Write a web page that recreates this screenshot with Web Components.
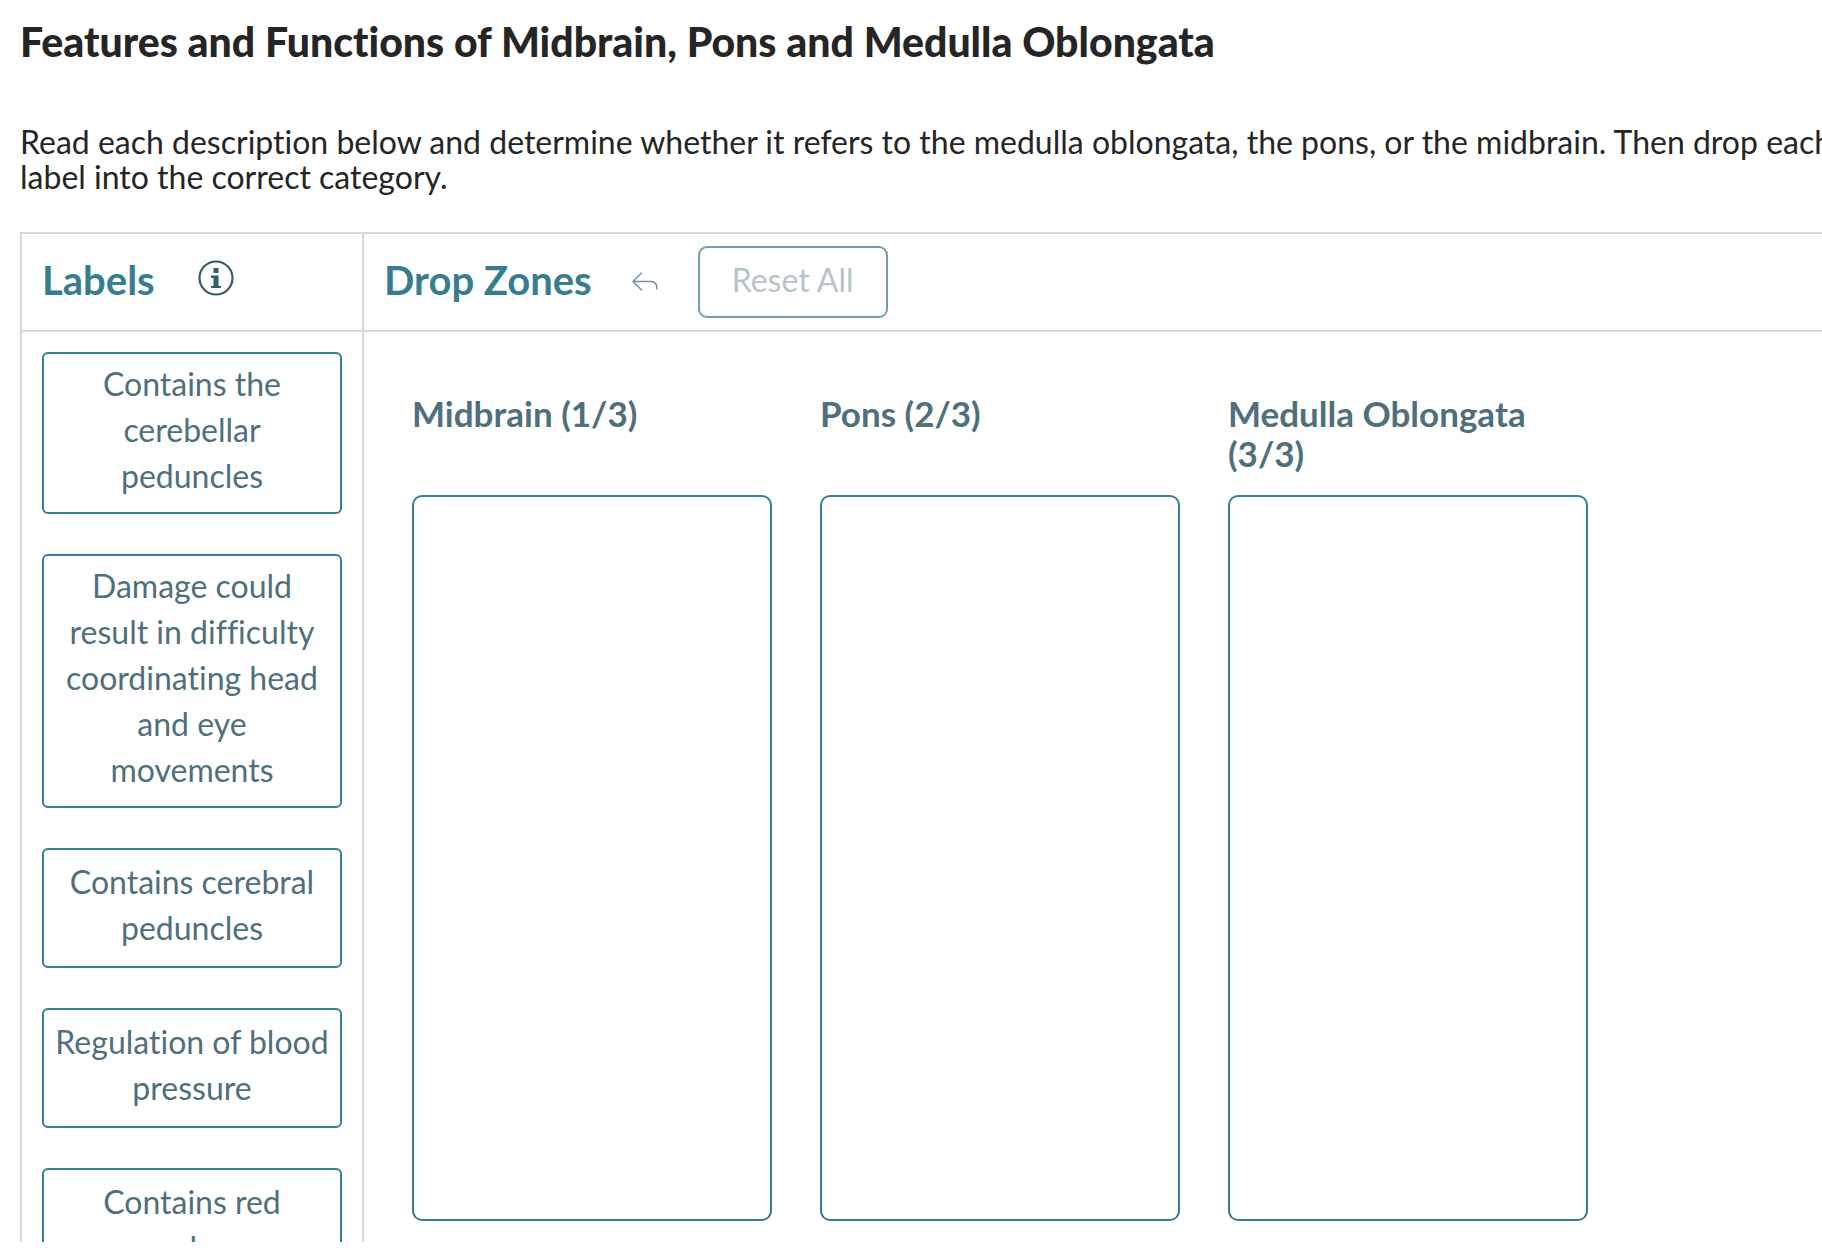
<!DOCTYPE html>
<html lang="en">
<head>
<meta charset="utf-8">
<meta name="viewport" content="width=device-width, initial-scale=1">
<title>Features and Functions of Midbrain, Pons and Medulla Oblongata</title>
<style>
    :root {
        --text: #252525;
        --teal: #367d91;
        --slate: #4f6f7b;
        --slate-dark: #375b68;
        --line: #d3dadd;
    }

    body {
        margin: 0;
        background: #fff;
        color: var(--text);
        font-family: Lato, "Open Sans", sans-serif;
        font-size: 32px;
        font-variant-ligatures: no-common-ligatures;
    }
</style>
</head>
<body>

<sorting-activity>
    <span slot="title">Features and Functions of Midbrain, Pons and Medulla Oblongata</span>
    <span slot="prompt">Read each description below and determine whether it refers to the medulla oblongata, the pons, or the midbrain. Then drop each label into the correct category.</span>

    <sorting-board>
        <drag-label slot="labels">Contains the cerebellar peduncles</drag-label>
        <drag-label slot="labels">Damage could result in difficulty coordinating head and eye movements</drag-label>
        <drag-label slot="labels">Contains cerebral peduncles</drag-label>
        <drag-label slot="labels">Regulation of blood pressure</drag-label>
        <drag-label slot="labels">Contains red nucleus</drag-label>

        <drop-zone slot="zones">Midbrain (1/3)</drop-zone>
        <drop-zone slot="zones">Pons (2/3)</drop-zone>
        <drop-zone slot="zones">Medulla Oblongata (3/3)</drop-zone>
    </sorting-board>
</sorting-activity>

<script>
class SortingActivity extends HTMLElement {
    constructor() {
        super();
        const shadow = this.attachShadow({mode: "open"});
        shadow.innerHTML = /*html*/`
            <style>
                :host {
                    display: block;
                    box-sizing: border-box;
                    height: calc(100vh - 6px);
                    overflow: hidden;
                    padding: 18px 0 0 20px;
                }

                /* the activity is a little wider than its frame */
                main {
                    margin-right: -40px;
                }

                h1 {
                    margin: 0 0 58px;
                    font-size: 41px;
                    line-height: 48px;
                    font-weight: 900;
                }

                p {
                    margin: 0 0 38px;
                    line-height: 35px;
                }
            </style>

            <main>
                <h1><slot name="title"></slot></h1>
                <p><slot name="prompt"></slot></p>
                <slot></slot>
            </main>
        `;
    }
}

class SortingBoard extends HTMLElement {
    constructor() {
        super();
        const shadow = this.attachShadow({mode: "open"});
        shadow.innerHTML = /*html*/`
            <style>
                :host {
                    display: grid;
                    grid-template-columns: 340px 1fr;
                    grid-template-rows: 96px auto;
                    gap: 2px;
                    padding: 2px;
                    background: var(--line);
                }

                header, section {
                    background: #fff;
                }

                header {
                    display: flex;
                    align-items: center;
                    gap: 40px;
                    padding: 0 20px;
                }

                h2 {
                    margin: 0;
                    padding-bottom: 4px;
                    color: var(--teal);
                    font-size: 40px;
                    line-height: 48px;
                    font-weight: 700;
                    white-space: nowrap;
                }

                .labels {
                    display: flex;
                    flex-direction: column;
                    gap: 40px;
                    padding: 20px;
                }

                .zones {
                    display: grid;
                    grid-template-columns: repeat(3, minmax(0, 360px));
                    align-items: start;
                    gap: 48px;
                    padding: 61px 48px;
                }
            </style>

            <header>
                <h2>Labels</h2>
                <icon-button name="info" label="Information"></icon-button>
            </header>
            <header>
                <h2>Drop Zones</h2>
                <icon-button name="undo" label="Undo"></icon-button>
                <reset-button>Reset All</reset-button>
            </header>
            <section class="labels"><slot name="labels"></slot></section>
            <section class="zones"><slot name="zones"></slot></section>
        `;
    }
}

const icons = {
    info: `
        <svg width="36" height="36" viewBox="0 0 36 36" fill="none">
            <circle cx="18" cy="18" r="16.5" stroke="var(--slate-dark)" stroke-width="2.2"/>
            <path fill="var(--slate-dark)" d="M15.5 8h5v5h-5zM13 15.5h7.5V26H23v2H13v-2h2.5v-8H13z"/>
        </svg>`,
    undo: `
        <svg width="26" height="20" viewBox="0 0 26 20" fill="none" stroke="#75919b" stroke-width="1.5" stroke-linecap="round" stroke-linejoin="round">
            <path d="M9.5 1 1 9.5 9.5 18M1 9.5h18c4 0 6 2.5 6 7.5"/>
        </svg>`
};

class IconButton extends HTMLElement {
    constructor() {
        super();
        const shadow = this.attachShadow({mode: "open"});
        shadow.innerHTML = /*html*/`
            <style>
                :host {
                    display: block;
                }

                :host([name="info"]) {
                    padding: 0 0 8px 3px;
                }

                button {
                    display: block;
                    padding: 0;
                    border: 0;
                    background: none;
                    cursor: pointer;
                }

                svg {
                    display: block;
                }
            </style>

            <button type="button">${icons[this.getAttribute("name")]}</button>
        `;
        shadow.querySelector("button").setAttribute("aria-label", this.getAttribute("label"));
    }
}

class ResetButton extends HTMLElement {
    constructor() {
        super();
        const shadow = this.attachShadow({mode: "open"});
        shadow.innerHTML = /*html*/`
            <style>
                :host {
                    display: block;
                }

                button {
                    padding: 12px 32px 16px;
                    border: 2px solid #759eaa;
                    border-radius: 9px;
                    background: none;
                    color: #b4c4c9;
                    font: inherit;
                    line-height: 40px;
                    white-space: nowrap;
                }
            </style>

            <button type="button" disabled><slot></slot></button>
        `;
    }
}

class DragLabel extends HTMLElement {
    constructor() {
        super();
        const shadow = this.attachShadow({mode: "open"});
        shadow.innerHTML = /*html*/`
            <style>
                :host {
                    display: block;
                }

                button {
                    display: block;
                    box-sizing: border-box;
                    width: 100%;
                    min-height: 120px;
                    padding: 7px 9px 13px;
                    border: 2px solid var(--teal);
                    border-radius: 6px;
                    background: #fff;
                    color: var(--slate);
                    font: inherit;
                    font-variant-ligatures: inherit;
                    line-height: 46px;
                    text-align: center;
                    cursor: grab;
                }
            </style>

            <button type="button" draggable="true"><slot></slot></button>
        `;
    }
}

class DropZone extends HTMLElement {
    constructor() {
        super();
        const shadow = this.attachShadow({mode: "open"});
        shadow.innerHTML = /*html*/`
            <style>
                :host {
                    display: block;
                }

                h3 {
                    margin: 0 0 22px;
                    min-height: 80px;
                    color: var(--slate);
                    font-size: 35px;
                    line-height: 40px;
                    font-weight: 700;
                }

                .target {
                    box-sizing: border-box;
                    min-height: 726px;
                    border: 2px solid var(--teal);
                    border-radius: 10px;
                }
            </style>

            <h3><slot></slot></h3>
            <div class="target"></div>
        `;
    }
}

customElements.define("icon-button", IconButton);
customElements.define("reset-button", ResetButton);
customElements.define("drag-label", DragLabel);
customElements.define("drop-zone", DropZone);
customElements.define("sorting-board", SortingBoard);
customElements.define("sorting-activity", SortingActivity);
</script>
</body>
</html>
